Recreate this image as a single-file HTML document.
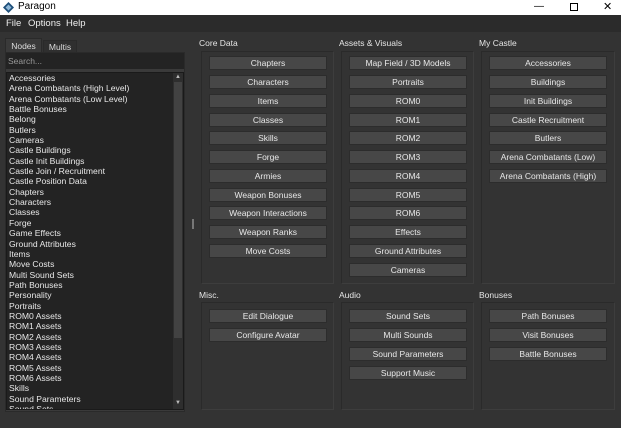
<!DOCTYPE html>
<html><head><style>
*{margin:0;padding:0;box-sizing:border-box}
body{width:621px;height:428px;background:#333;font-family:"Liberation Sans",sans-serif;font-size:9px;color:#ddd;position:relative;overflow:hidden}
.a{position:absolute}
.title{left:0;top:0;width:621px;height:15px;background:#fff;color:#000;font-size:10px}
.menu{top:15px;left:0;width:621px;height:17px;background:#2b2b2b}
.menu span{position:absolute;top:3px;font-size:9.5px;color:#eee}
.list{left:6px;top:72px;width:178px;height:338px;background:#232323;border:1px solid #1a1a1a;overflow:hidden}
.list div{height:10.35px;line-height:10.35px;padding-left:2px;color:#e8e8e8;white-space:nowrap;font-size:8.6px}
.box{border:1px solid #2a2a2a;border-right-color:#3d3d3d;border-bottom-color:#3d3d3d}
.lbl{font-size:8.5px;color:#e6e6e6}
.btn{position:absolute;width:118px;height:14px;background:#474747;border:1px solid #2c2c2c;border-radius:1px;text-align:center;line-height:12px;font-size:8.5px;color:#e8e8e8}
</style></head><body>
<div class="a title"><svg class="a" style="left:3px;top:2px" width="11" height="11"><path d="M5.5 0L11 5.5 5.5 11 0 5.5z" fill="#1e4f7a"/><path d="M5.5 2.5L8.5 5.5 5.5 8.5 2.5 5.5z" fill="#8fb8d8"/></svg><span class="a" style="left:18px;top:1px">Paragon</span>
<span class="a" style="left:534px;top:1px;font-size:10px">—</span>
<div class="a" style="left:570px;top:3px;width:8px;height:8px;border:1px solid #000"></div>
<span class="a" style="left:603px;top:0px;font-size:11px">✕</span></div>
<div class="a menu"><span style="left:6px">File</span><span style="left:28px">Options</span><span style="left:66px">Help</span></div>
<div class="a" style="left:5px;top:38px;width:37px;height:15px;background:#3a3a3a;border:1px solid #2a2a2a;border-bottom:none;text-align:center;line-height:14px;font-size:8.5px">Nodes</div>
<div class="a" style="left:43px;top:40px;width:34px;height:13px;background:#2f2f2f;border:1px solid #2a2a2a;border-bottom:none;text-align:center;line-height:12px;font-size:8.5px">Multis</div>
<div class="a" style="left:5px;top:52px;width:180px;height:360px;background:#3a3a3a;border:1px solid #2a2a2a"></div>
<div class="a" style="left:6px;top:53px;width:178px;height:16px;background:#232323;color:#999;padding:3px 2px;font-size:8.5px">Search...</div>
<div class="a list">
<div>Accessories</div><div>Arena Combatants (High Level)</div><div>Arena Combatants (Low Level)</div><div>Battle Bonuses</div><div>Belong</div><div>Butlers</div><div>Cameras</div><div>Castle Buildings</div><div>Castle Init Buildings</div><div>Castle Join / Recruitment</div><div>Castle Position Data</div><div>Chapters</div><div>Characters</div><div>Classes</div><div>Forge</div><div>Game Effects</div><div>Ground Attributes</div><div>Items</div><div>Move Costs</div><div>Multi Sound Sets</div><div>Path Bonuses</div><div>Personality</div><div>Portraits</div><div>ROM0 Assets</div><div>ROM1 Assets</div><div>ROM2 Assets</div><div>ROM3 Assets</div><div>ROM4 Assets</div><div>ROM5 Assets</div><div>ROM6 Assets</div><div>Skills</div><div>Sound Parameters</div><div>Sound Sets</div>
</div>
<div class="a" style="left:173px;top:73px;width:10px;height:336px;background:#2e2e2e"></div>
<div class="a" style="left:174px;top:74px;width:8px;height:8px;color:#bbb;font-size:6px;text-align:center">▲</div>
<div class="a" style="left:174px;top:82px;width:8px;height:256px;background:#424242"></div>
<div class="a" style="left:174px;top:400px;width:8px;height:8px;color:#bbb;font-size:6px;text-align:center">▼</div>
<div class="a" style="left:192px;top:219px;width:2px;height:10px;background:#777"></div>

<span class="a lbl" style="left:199px;top:38px">Core Data</span>
<span class="a lbl" style="left:339px;top:38px">Assets &amp; Visuals</span>
<span class="a lbl" style="left:479px;top:38px">My Castle</span>
<div class="a box" style="left:201px;top:51px;width:133px;height:233px"></div>
<div class="a box" style="left:341px;top:51px;width:133px;height:233px"></div>
<div class="a box" style="left:481px;top:51px;width:134px;height:233px"></div>
<span class="a lbl" style="left:199px;top:290px">Misc.</span>
<span class="a lbl" style="left:339px;top:290px">Audio</span>
<span class="a lbl" style="left:479px;top:290px">Bonuses</span>
<div class="a box" style="left:201px;top:302px;width:133px;height:108px"></div>
<div class="a box" style="left:341px;top:302px;width:133px;height:108px"></div>
<div class="a box" style="left:481px;top:302px;width:134px;height:108px"></div>

<div class="btn" style="left:209px;top:56px">Chapters</div>
<div class="btn" style="left:209px;top:75px">Characters</div>
<div class="btn" style="left:209px;top:94px">Items</div>
<div class="btn" style="left:209px;top:113px">Classes</div>
<div class="btn" style="left:209px;top:131px">Skills</div>
<div class="btn" style="left:209px;top:150px">Forge</div>
<div class="btn" style="left:209px;top:169px">Armies</div>
<div class="btn" style="left:209px;top:188px">Weapon Bonuses</div>
<div class="btn" style="left:209px;top:206px">Weapon Interactions</div>
<div class="btn" style="left:209px;top:225px">Weapon Ranks</div>
<div class="btn" style="left:209px;top:244px">Move Costs</div>

<div class="btn" style="left:349px;top:56px">Map Field / 3D Models</div>
<div class="btn" style="left:349px;top:75px">Portraits</div>
<div class="btn" style="left:349px;top:94px">ROM0</div>
<div class="btn" style="left:349px;top:113px">ROM1</div>
<div class="btn" style="left:349px;top:131px">ROM2</div>
<div class="btn" style="left:349px;top:150px">ROM3</div>
<div class="btn" style="left:349px;top:169px">ROM4</div>
<div class="btn" style="left:349px;top:188px">ROM5</div>
<div class="btn" style="left:349px;top:206px">ROM6</div>
<div class="btn" style="left:349px;top:225px">Effects</div>
<div class="btn" style="left:349px;top:244px">Ground Attributes</div>
<div class="btn" style="left:349px;top:263px">Cameras</div>

<div class="btn" style="left:489px;top:56px">Accessories</div>
<div class="btn" style="left:489px;top:75px">Buildings</div>
<div class="btn" style="left:489px;top:94px">Init Buildings</div>
<div class="btn" style="left:489px;top:113px">Castle Recruitment</div>
<div class="btn" style="left:489px;top:131px">Butlers</div>
<div class="btn" style="left:489px;top:150px">Arena Combatants (Low)</div>
<div class="btn" style="left:489px;top:169px">Arena Combatants (High)</div>

<div class="btn" style="left:209px;top:309px">Edit Dialogue</div>
<div class="btn" style="left:209px;top:328px">Configure Avatar</div>
<div class="btn" style="left:349px;top:309px">Sound Sets</div>
<div class="btn" style="left:349px;top:328px">Multi Sounds</div>
<div class="btn" style="left:349px;top:347px">Sound Parameters</div>
<div class="btn" style="left:349px;top:366px">Support Music</div>
<div class="btn" style="left:489px;top:309px">Path Bonuses</div>
<div class="btn" style="left:489px;top:328px">Visit Bonuses</div>
<div class="btn" style="left:489px;top:347px">Battle Bonuses</div>
</body></html>
